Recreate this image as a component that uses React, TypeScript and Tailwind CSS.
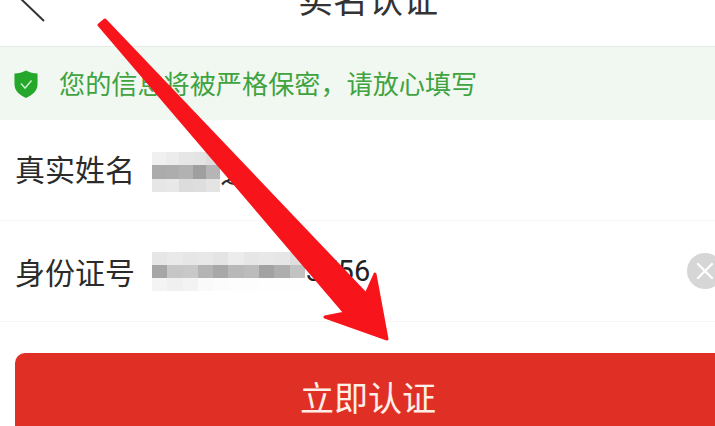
import { X } from 'lucide-react'

const nameCells = [
  ['#f0f0f0', '#ececec', '#e6e6e6', '#e4e4e4', '#dedede'],
  ['#ababab', '#adadad', '#b2b2b2', '#9f9f9f', '#b5b5b5'],
  ['#e6e6e6', '#e8e8e8', '#dcdcdc', '#dedede', '#e4e4e4'],
]

const idCells = [
  ['#e6e6e6', '#e9e9e9', '#e6e6e6', '#e8e8e8', '#e4e4e4', '#ececec', '#e6e6e6', '#e8e8e8', '#e6e6e6', '#dedede'],
  ['#a6a6a6', '#c6c6c6', '#c8c8c8', '#b4b4b4', '#a8a8a8', '#b8b8b8', '#bcbcbc', '#a2a2a2', '#aeaeae', '#c2c2c2'],
  ['#f4f4f4', '#f0f0f0', '#f3f3f3', '#fafafa', '#fcfcfc', '#fdfdfd', '#fdfdfd', '#fefefe', '#fefefe', '#fefefe'],
]

function Mosaic({ cells, className }: { cells: string[][]; className: string }) {
  return (
    <div className={`flex shrink-0 flex-col ${className}`}>
      {cells.map((row, i) => (
        <div key={i} className="flex flex-1">
          {row.map((color, j) => (
            <div key={j} className="flex-1" style={{ backgroundColor: color }} />
          ))}
        </div>
      ))}
    </div>
  )
}

export default function App() {
  return (
    <div className="relative h-[426px] w-[715px] overflow-hidden bg-white font-['Noto_Sans_CJK_SC',sans-serif] text-[#2b2b2b]">
      {/* Header, cut off by the top of the picture */}
      <div className="flex h-[47px] items-end justify-center border-b border-[#e6e9e6] pb-[23px] pl-[21px]">
        <svg className="absolute left-[18px] top-0" width="30" height="24" viewBox="0 0 30 24" fill="none">
          <path d="M2 -2L26 21" stroke="#333" strokeWidth="2" />
        </svg>
        <span className="text-[35px] leading-[50px] text-[#333]">实名认证</span>
      </div>

      {/* Privacy notice */}
      <div className="flex h-[73px] items-center gap-[21px] bg-[#f1f8f1] pl-[14px]">
        <svg width="24" height="28" viewBox="0 0 26 28" preserveAspectRatio="none">
          <path d="M13 0.5C17 2.5 21 3.5 25.5 3.5V14C25.5 21 20 25 13 28C6 25 0.5 21 0.5 14V3.5C5 3.5 9 2.5 13 0.5Z" fill="#25a72c" />
          <path d="M7.5 13.5L12 18L19 10.5" fill="none" stroke="#c9ecc9" strokeWidth="1.6" />
        </svg>
        <span className="text-[26.15px] leading-none text-[#3fa33f]">您的信息将被严格保密，请放心填写</span>
      </div>

      {/* Form rows */}
      <div className="flex h-[101px] items-center border-b border-[#f6f6f6] pb-[4px] pl-[15px]">
        <span className="w-[137px] shrink-0 text-[30px] leading-none">真实姓名</span>
        <Mosaic cells={nameCells} className="mt-[8px] h-[40px] w-[68px]" />
        <span className="mt-[8px] text-[28px] leading-none">之</span>
      </div>
      <div className="flex h-[101px] items-center border-b border-[#f6f6f6] pl-[15px]">
        <span className="w-[137px] shrink-0 text-[30px] leading-none">身份证号</span>
        <Mosaic cells={idCells} className="mt-[1px] h-[39px] w-[153px]" />
        <span className="font-['Roboto',sans-serif] text-[29px] leading-none text-[#222]">5756</span>
        <div className="ml-auto mr-[-8px] flex size-[36px] shrink-0 items-center justify-center rounded-full bg-[#d6d6d6]">
          <X size={28} strokeWidth={2} className="text-white" />
        </div>
      </div>

      {/* Submit button, runs off the right and bottom */}
      <div className="ml-[15px] mr-[-10px] mt-[31px] flex h-[90px] justify-start rounded-t-[10px] bg-[#e03025] pl-[285px] pt-[19px]">
        <span className="text-[34px] leading-[50px] text-[#fdeee8]">立即认证</span>
      </div>

      {/* Red annotation arrow drawn over the screenshot */}
      <svg className="absolute left-0 top-0" width="715" height="426" viewBox="0 0 715 426">
        <path
          d="M99 25L105 20L366 294L375 274L387 339L325 317L345 313Z"
          fill="#f7141b"
          stroke="#f7141b"
          strokeWidth="3"
          strokeLinejoin="round"
        />
      </svg>
    </div>
  )
}
